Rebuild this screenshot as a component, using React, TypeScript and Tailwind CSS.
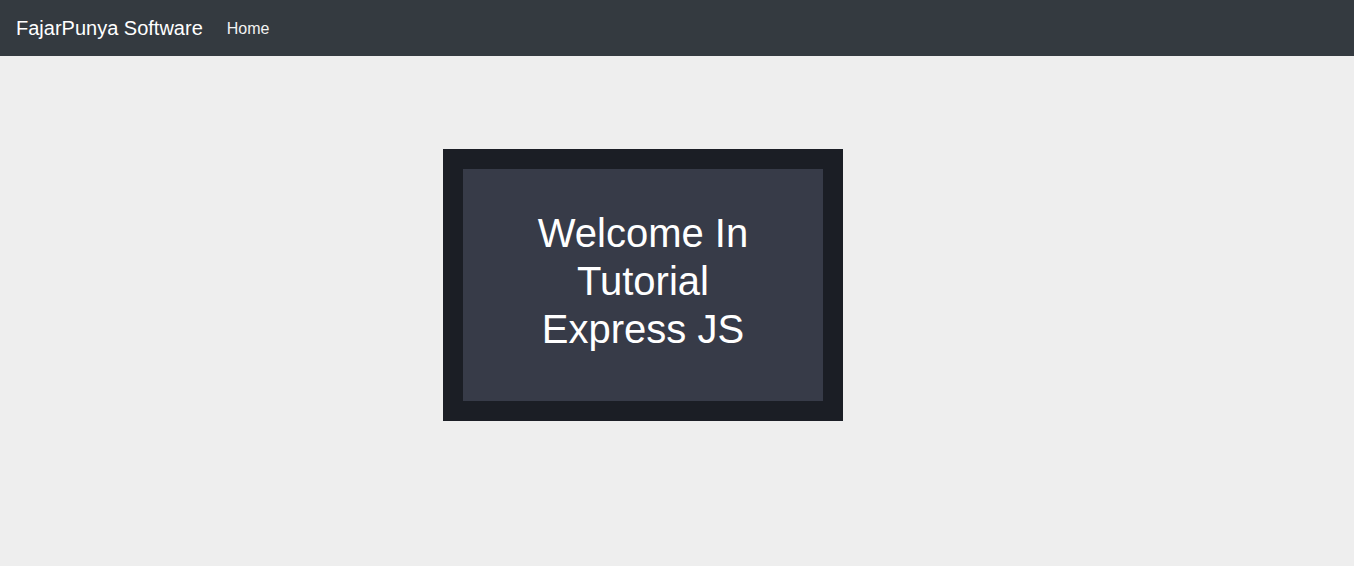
import React from "react";

export default function App() {
  return (
    <div className="min-h-[566px] bg-[#eeeeee]" style={{ fontFamily: '"Liberation Sans", Arial, sans-serif' }}>
      <nav className="h-14 bg-[#343a40] flex items-center px-4">
        <span className="text-[20px] leading-[30px] text-white mr-4">FajarPunya Software</span>
        <span className="text-[16px] leading-6 text-[#f2f2f2] px-2 pt-[2px]">Home</span>
      </nav>
      <div className="pt-[93px] pl-[443px]">
        <div className="w-[400px] bg-[#1b1e25] p-5">
          <div className="bg-[#373b48] p-10 text-center">
            <h1 className="text-[40px] leading-[48px] text-white mb-2">Welcome In Tutorial Express JS</h1>
          </div>
        </div>
      </div>
    </div>
  );
}
